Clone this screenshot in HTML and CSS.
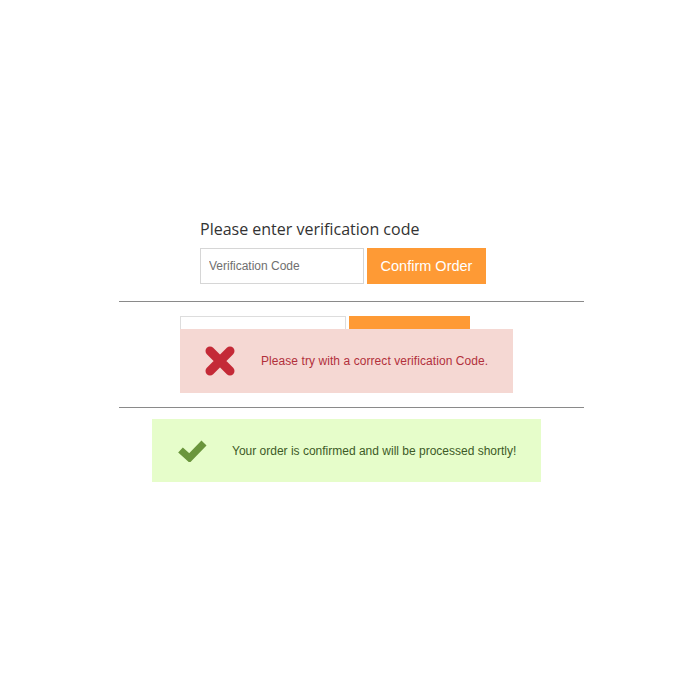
FILE: index.html
```html
<!DOCTYPE html>
<html lang="en">
<head>
<meta charset="utf-8">
<title>Verification</title>
<link rel="stylesheet" href="styles.css">
</head>
<body>
<main class="page">
  <section class="verify">
    <h2 class="title">Please enter verification code</h2>
    <div class="form">
      <input class="code" type="text" placeholder="Verification Code">
      <button class="confirm" type="button">Confirm Order</button>
    </div>
  </section>
  <hr class="rule">
  <section class="verify verify--error">
    <div class="form">
      <input class="code code--wide" type="text">
      <button class="confirm confirm--wide" type="button"></button>
    </div>
    <div class="alert alert--error">
      <svg class="alert-icon" width="30" height="30" viewBox="0 0 30 30" aria-hidden="true">
        <path d="M5 5 L25 25 M25 5 L5 25" stroke="#c42a37" stroke-width="9" stroke-linecap="round" fill="none"/>
      </svg>
      <p class="alert-text">Please try with a correct verification Code.</p>
    </div>
  </section>
  <hr class="rule">
  <div class="alert alert--success">
    <svg class="alert-icon" width="30" height="23" viewBox="0 0 30 23" aria-hidden="true">
      <path d="M3.5 11 L12.5 19 L27 4" stroke="#6a953c" stroke-width="7" stroke-linejoin="miter" fill="none"/>
    </svg>
    <p class="alert-text">Your order is confirmed and will be processed shortly!</p>
  </div>
</main>
</body>
</html>
```
FILE: styles.css
```css
html, body {
  margin: 0;
  padding: 0;
  background: #ffffff;
}

.page {
  width: 465px;
  margin-left: 119px;
  padding-top: 218px;
  font-family: "Liberation Sans", Arial, sans-serif;
}

.verify {
  padding-left: 81px;
  padding-bottom: 17px;
}

.title {
  margin: 0 0 8px 0;
  font-family: "Open Sans", "Liberation Sans", sans-serif;
  font-weight: 400;
  font-size: 16px;
  line-height: 22px;
  color: #333333;
}

.form {
  display: flex;
  gap: 3px;
}

.code {
  box-sizing: border-box;
  width: 164px;
  height: 36px;
  margin: 0;
  padding: 0 8px;
  border: 1px solid #d6d6d6;
  background: #ffffff;
  font-family: "Liberation Sans", Arial, sans-serif;
  font-size: 12px;
  color: #555555;
  outline: none;
}

.code::placeholder {
  color: #6f6f6f;
}

.code--wide {
  width: 166px;
  border-color: #dddddd;
}

.confirm {
  box-sizing: border-box;
  width: 119px;
  height: 36px;
  margin: 0;
  padding: 0;
  border: 0;
  background: #fe9a35;
  color: #ffffff;
  font-family: "Liberation Sans", Arial, sans-serif;
  font-size: 14.5px;
}

.confirm--wide {
  width: 121px;
}

.rule {
  margin: 0;
  border: 0;
  height: 1px;
  background: #8a8a8a;
}

.verify--error {
  padding-left: 61px;
  padding-top: 14px;
  padding-bottom: 14px;
}

.alert {
  display: flex;
  align-items: center;
  box-sizing: border-box;
  padding-left: 25px;
}

.alert-text {
  margin: 0;
  font-size: 12px;
  line-height: 16px;
}

.alert--error {
  position: relative;
  margin-top: -23px;
  width: 333px;
  height: 64px;
  gap: 26px;
  background: #f5d8d3;
}

.alert--error .alert-text {
  color: #b2303b;
  letter-spacing: 0.07px;
}

.alert--success {
  margin-top: 11px;
  margin-left: 33px;
  width: 389px;
  height: 63px;
  gap: 25px;
  background: #e6fdca;
}

.alert--success .alert-text {
  color: #3d5a27;
}

.alert-icon {
  flex: none;
  display: block;
}
```
